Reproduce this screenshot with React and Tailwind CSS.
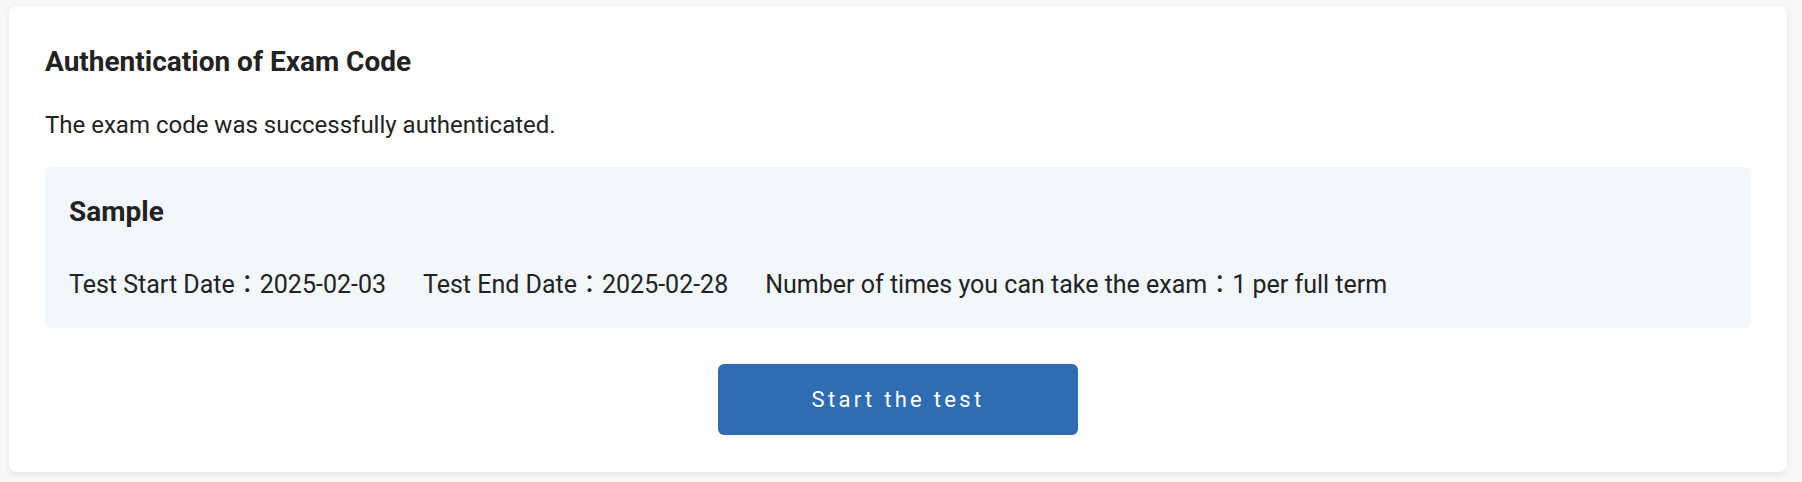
export default function App() {
  return (
    <div className="min-h-[482px] w-full bg-[#f7f7f7] pt-[6px] pb-[11px] pl-[9px] pr-[15px]" style={{ fontFamily: 'Roboto, "Noto Sans CJK JP", sans-serif' }}>
      <div className="rounded-[8px] bg-white px-[36px] pt-[39px] pb-[37px] shadow-[0_2px_6px_rgba(0,0,0,0.08)] text-[#222]">
        <h1 className="text-[28px] leading-[34px] font-bold">Authentication of Exam Code</h1>
        <p className="mt-[30px] text-[24px] leading-[32px]">The exam code was successfully authenticated.</p>
        <div className="mt-[26px] rounded-[6px] bg-[#f2f7fb] px-[24px] pt-[28px] pb-[27px]">
          <h2 className="text-[28px] leading-[34px] font-bold">Sample</h2>
          <div className="mt-[40px] flex gap-[37px] text-[25px] leading-[32px]">
            <span>Test Start Date：2025-02-03</span>
            <span>Test End Date：2025-02-28</span>
            <span>Number of times you can take the exam：1 per full term</span>
          </div>
        </div>
        <div className="mt-[36px] flex justify-center">
          <button className="h-[71px] w-[360px] rounded-[6px] bg-[#2f6cb1] text-[22px] tracking-[0.15em] text-white">
            Start the test
          </button>
        </div>
      </div>
    </div>
  );
}
